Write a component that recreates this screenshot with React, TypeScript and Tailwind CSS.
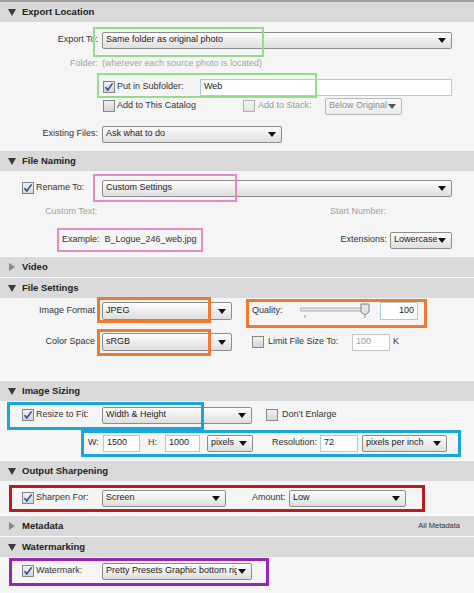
import type { ReactNode } from 'react'

function Caret({ color = '#111' }: { color?: string }) {
  return (
    <svg width="8" height="5" viewBox="0 0 8 5" className="shrink-0">
      <polygon points="0,0 8,0 4,5" fill={color} />
    </svg>
  )
}

function Select({
  text,
  className = '',
  disabled = false,
}: {
  text: string
  className?: string
  disabled?: boolean
}) {
  return (
    <div
      className={`relative flex h-[17px] shrink-0 items-center overflow-hidden rounded-[2px] border bg-gradient-to-b pl-[3px] pr-[14px] ${
        disabled
          ? 'border-[#b8b8b8] from-[#fafafa] to-[#ececec] text-[#8a8a8a]'
          : 'border-[#8c8c8c] from-[#fdfdfd] to-[#dedede] text-[#222]'
      } ${className}`}
    >
      <span className="overflow-hidden whitespace-nowrap">{text}</span>
      <span className="absolute right-[4px] top-[5px] flex h-[6px] w-[10px] items-center justify-center">
        <Caret color={disabled ? '#555' : '#111'} />
      </span>
    </div>
  )
}

function Checkbox({
  checked = false,
  disabled = false,
}: {
  checked?: boolean
  disabled?: boolean
}) {
  return (
    <div
      className={`flex h-[12px] w-[12px] shrink-0 items-center justify-center border bg-gradient-to-b ${
        disabled
          ? 'border-[#b0b0b0] from-[#f4f4f4] to-[#e4e4e4]'
          : 'border-[#858585] from-[#f0f0f0] to-[#d6d6d6]'
      }`}
    >
      {checked && (
        <svg width="10" height="10" viewBox="0 0 10 10">
          <path
            d="M1.5 5.2 L3.8 8 L8.6 1.4"
            fill="none"
            stroke="#2c4c9c"
            strokeWidth="1.6"
          />
        </svg>
      )}
    </div>
  )
}

function TextBox({
  text,
  className = '',
  muted = false,
}: {
  text: string
  className?: string
  muted?: boolean
}) {
  return (
    <div
      className={`flex h-[17px] shrink-0 items-center border bg-white px-[3px] ${
        muted
          ? 'border-[#c4c4c4] text-[#9a9a9a]'
          : 'border-[#a9cdd9] text-[#222]'
      } ${className}`}
    >
      {text}
    </div>
  )
}

function Slider() {
  return (
    <svg width="72" height="18" viewBox="0 0 72 18" className="shrink-0">
      <rect x="0" y="6" width="68" height="3" rx="1" fill="#e8e8e8" stroke="#9a9a9a" strokeWidth="0.8" />
      <line x1="5" y1="13" x2="5" y2="16" stroke="#999" strokeWidth="1" />
      <line x1="65" y1="13" x2="65" y2="16" stroke="#999" strokeWidth="1" />
      <path d="M61 2 H69 V10 L65 13 L61 10 Z" fill="#e4e4e4" stroke="#777" strokeWidth="0.9" />
    </svg>
  )
}

function SectionHeader({
  title,
  open = true,
  right,
  first = false,
}: {
  title: string
  open?: boolean
  right?: ReactNode
  first?: boolean
}) {
  return (
    <div
      className={`flex shrink-0 items-center bg-[#d9d9d9] pl-[8px] pr-[14px] ${
        first ? 'h-[20px]' : 'h-[21px] border-t border-[#fbfbfb]'
      }`}
    >
      {open ? (
        <svg width="8" height="7" viewBox="0 0 8 7" className="shrink-0">
          <polygon points="0,0 8,0 4,7" fill="#3a3a3a" />
        </svg>
      ) : (
        <svg width="8" height="8" viewBox="0 0 8 8" className="shrink-0">
          <polygon points="1,0 7,4 1,8" fill="#8a8a8a" />
        </svg>
      )}
      <span className="ml-[6px] text-[9.5px] font-bold text-[#222]">{title}</span>
      {right && <span className="ml-auto">{right}</span>}
    </div>
  )
}

function Row({ className = 'h-[20px]', children }: { className?: string; children: ReactNode }) {
  return <div className={`flex shrink-0 items-center ${className}`}>{children}</div>
}

export default function App() {
  return (
    <div
      className="relative flex h-[593px] w-[474px] flex-col overflow-hidden bg-[#f5f5f5] text-[9px] text-[#333]"
      style={{ fontFamily: '"Liberation Sans", Arial, sans-serif' }}
    >
      <div className="h-[2px] shrink-0 bg-[#9f9f9f]" />

      {/* Export Location */}
      <SectionHeader title="Export Location" first />
      <div className="flex h-[128px] shrink-0 flex-col">
        <Row className="mt-[8px] h-[20px]">
          <span className="w-[98px] text-right">Export To:</span>
          <Select text="Same folder as original photo" className="ml-[4px] w-[350px]" />
        </Row>
        <Row className="mt-[4px] h-[20px] text-[#a3a3a3]">
          <span className="w-[98px] text-right">Folder:</span>
          <span className="ml-[4px]">(wherever each source photo is located)</span>
        </Row>
        <Row className="mt-[3px] h-[20px] pl-[103px]">
          <Checkbox checked />
          <span className="ml-[2px] w-[83px]">Put in Subfolder:</span>
          <TextBox text="Web" className="w-[252px]" />
        </Row>
        <Row className="h-[18px] pl-[103px]">
          <Checkbox />
          <span className="ml-[2px] w-[126px]">Add to This Catalog</span>
          <Checkbox disabled />
          <span className="ml-[3px] w-[67px] text-[#9a9a9a]">Add to Stack:</span>
          <Select text="Below Original" disabled className="w-[77px]" />
        </Row>
        <Row className="mt-[9px] h-[20px]">
          <span className="w-[98px] text-right">Existing Files:</span>
          <Select text="Ask what to do" className="ml-[4px] w-[180px]" />
        </Row>
      </div>

      {/* File Naming */}
      <SectionHeader title="File Naming" />
      <div className="flex h-[85px] shrink-0 flex-col">
        <Row className="mt-[7px] h-[20px] pl-[22px]">
          <Checkbox checked />
          <span className="ml-[2px] w-[64px]">Rename To:</span>
          <Select text="Custom Settings" className="ml-[2px] w-[350px]" />
        </Row>
        <Row className="mt-[4px] h-[20px] pl-[45px] text-[#a3a3a3]">
          <span className="w-[285px]">Custom Text:</span>
          <span>Start Number:</span>
        </Row>
        <Row className="mt-[8px] h-[20px] pl-[62px] pr-[22px]">
          <span>Example:</span>
          <span className="ml-[5px]">B_Logue_246_web.jpg</span>
          <span className="ml-auto">Extensions:</span>
          <Select text="Lowercase" className="ml-[3px] w-[62px]" />
        </Row>
      </div>

      {/* Video */}
      <SectionHeader title="Video" open={false} />

      {/* File Settings */}
      <SectionHeader title="File Settings" />
      <div className="flex h-[82px] shrink-0 flex-col">
        <Row className="mt-[3px] h-[20px]">
          <span className="w-[95px] text-right">Image Format</span>
          <Select text="JPEG" className="ml-[7px] h-[18px] w-[130px]" />
          <span className="ml-[20px] w-[48px]">Quality:</span>
          <Slider />
          <TextBox text="100" className="ml-[8px] h-[18px] w-[38px] justify-end" />
        </Row>
        <Row className="mt-[11px] h-[20px]">
          <span className="w-[95px] text-right">Color Space</span>
          <Select text="sRGB" className="ml-[7px] h-[18px] w-[130px]" />
          <span className="ml-[20px]">
            <Checkbox />
          </span>
          <span className="ml-[4px] w-[84px]">Limit File Size To:</span>
          <TextBox text="100" muted className="w-[38px]" />
          <span className="ml-[3px]">K</span>
        </Row>
      </div>

      {/* Image Sizing */}
      <SectionHeader title="Image Sizing" />
      <div className="flex h-[59px] shrink-0 flex-col">
        <Row className="mt-[4px] h-[20px] pl-[22px]">
          <Checkbox checked />
          <span className="ml-[2px] w-[64px]">Resize to Fit:</span>
          <Select text="Width & Height" className="ml-[2px] w-[150px]" />
          <span className="ml-[14px]">
            <Checkbox />
          </span>
          <span className="ml-[4px]">Don’t Enlarge</span>
        </Row>
        <Row className="mt-[8px] h-[20px] pl-[88px]">
          <span className="w-[15px]">W:</span>
          <TextBox text="1500" className="w-[37px]" />
          <span className="ml-[8px] w-[17px]">H:</span>
          <TextBox text="1000" className="w-[35px]" />
          <Select text="pixels" className="ml-[7px] w-[46px]" />
          <span className="ml-[19px] w-[48px]">Resolution:</span>
          <TextBox text="72" className="w-[38px]" />
          <Select text="pixels per inch" className="ml-[4px] w-[85px]" />
        </Row>
      </div>

      {/* Output Sharpening */}
      <SectionHeader title="Output Sharpening" />
      <div className="flex h-[34px] shrink-0 flex-col">
        <Row className="mt-[7px] h-[20px] pl-[22px]">
          <Checkbox checked />
          <span className="ml-[2px] w-[64px]">Sharpen For:</span>
          <Select text="Screen" className="ml-[2px] w-[124px]" />
          <span className="ml-[26px] w-[37px]">Amount:</span>
          <Select text="Low" className="w-[117px]" />
        </Row>
      </div>

      {/* Metadata */}
      <SectionHeader
        title="Metadata"
        open={false}
        right={<span className="text-[7.5px] text-[#333]">All Metadata</span>}
      />

      {/* Watermarking */}
      <SectionHeader title="Watermarking" />
      <div className="flex h-[36px] shrink-0 flex-col">
        <Row className="mt-[4px] h-[20px] pl-[22px]">
          <Checkbox checked />
          <span className="ml-[2px] w-[64px]">Watermark:</span>
          <Select text="Pretty Presets Graphic bottom right" className="ml-[2px] w-[150px]" />
        </Row>
      </div>

      {/* annotation outlines drawn over the panel */}
      <div className="pointer-events-none absolute left-[93px] top-[27px] h-[30px] w-[171px] border-2 border-[#96dc8c]" />
      <div className="pointer-events-none absolute left-[97px] top-[73px] h-[25px] w-[220px] border-2 border-[#96dc8c]" />
      <div className="pointer-events-none absolute left-[93px] top-[174px] h-[28px] w-[144px] border-2 border-[#e98ac8]" />
      <div className="pointer-events-none absolute left-[57px] top-[228px] h-[24px] w-[146px] border-2 border-[#e98ac8]" />
      <div className="pointer-events-none absolute left-[97px] top-[297px] h-[26px] w-[114px] border-[3px] border-[#f07b2e]" />
      <div className="pointer-events-none absolute left-[97px] top-[329px] h-[27px] w-[114px] border-[3px] border-[#f07b2e]" />
      <div className="pointer-events-none absolute left-[246px] top-[299px] h-[29px] w-[181px] border-[3px] border-[#f07b2e]" />
      <div className="pointer-events-none absolute left-[7px] top-[402px] h-[28px] w-[197px] border-[3px] border-[#1aa6dc]" />
      <div className="pointer-events-none absolute left-[81px] top-[430px] h-[27px] w-[380px] border-[3px] border-[#1aa6dc]" />
      <div className="pointer-events-none absolute left-[9px] top-[485px] h-[27px] w-[416px] border-[3px] border-[#b81c1c]" />
      <div className="pointer-events-none absolute left-[9px] top-[558px] h-[28px] w-[260px] border-[3px] border-[#9626b8]" />
    </div>
  )
}
